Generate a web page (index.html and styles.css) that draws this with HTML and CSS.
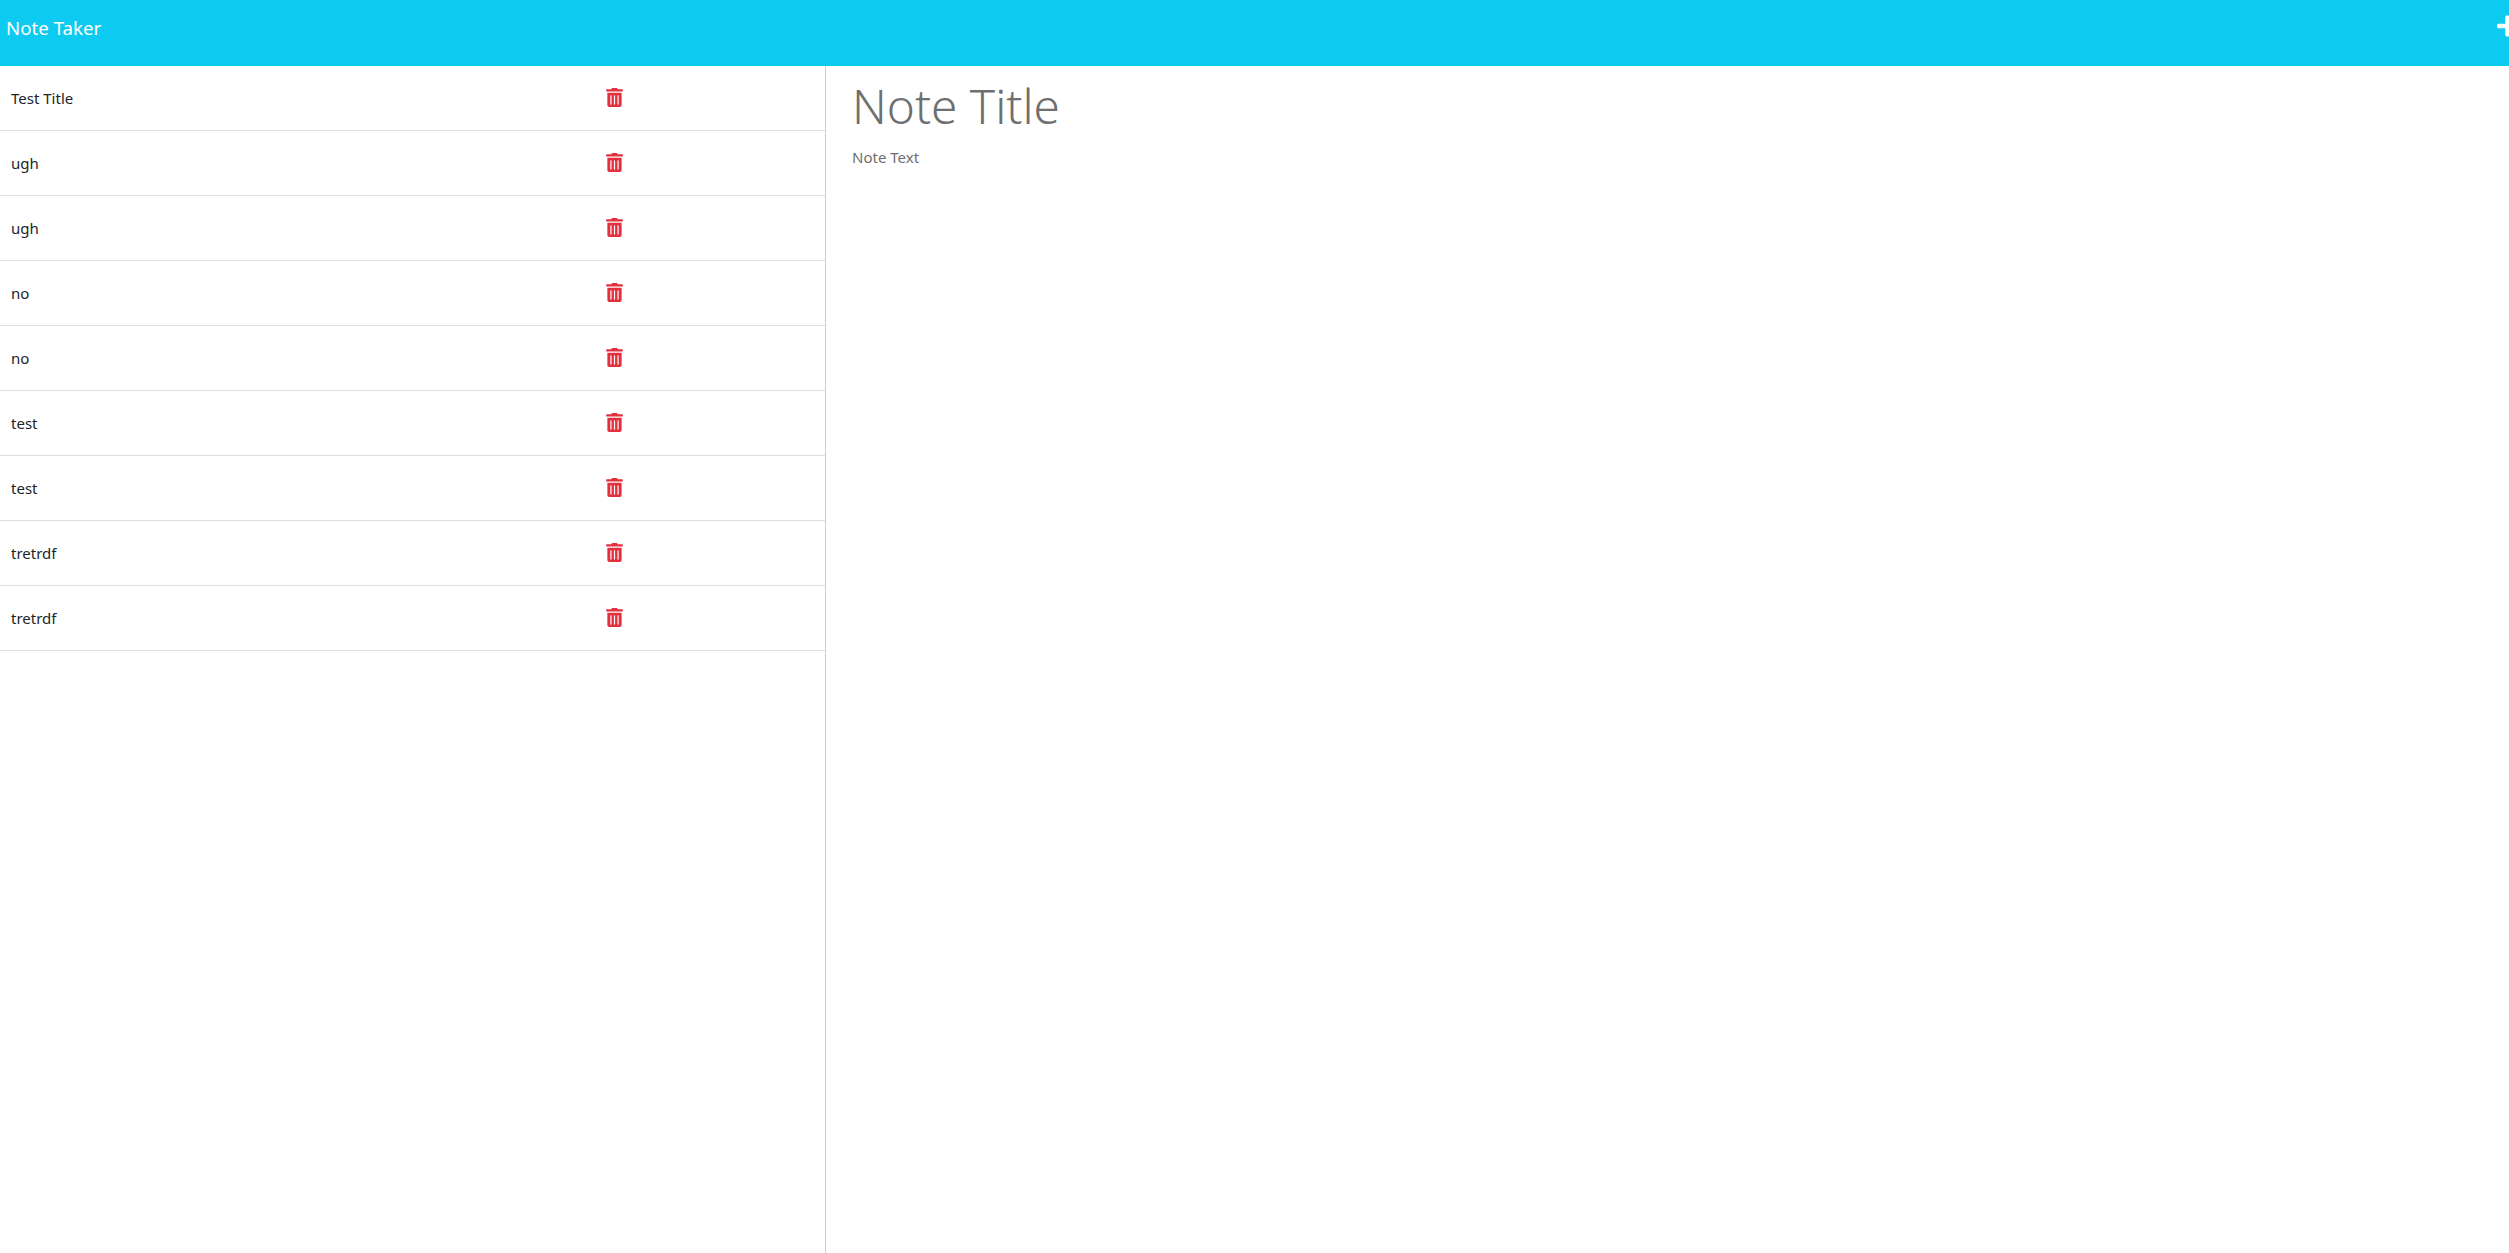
FILE: index.html
```html
<!DOCTYPE html>
<html lang="en">

<head>
  <meta charset="UTF-8" />
  <meta name="viewport" content="width=device-width, initial-scale=1.0" />
  <title>Note Taker</title>
  <link rel="stylesheet" href="styles.css">
</head>

<body>
  <!-- top bar -->
  <nav class="navbar">
    <span class="brand">Note Taker</span>
    <svg class="plus" viewBox="0 0 448 512">
      <path d="M416 208H272V64c0-17.67-14.33-32-32-32h-32c-17.67 0-32 14.33-32 32v144H32c-17.67 0-32 14.33-32 32v32c0 17.67 14.33 32 32 32h144v144c0 17.67 14.33 32 32 32h32c17.67 0 32-14.33 32-32V304h144c17.67 0 32-14.33 32-32v-32c0-17.67-14.33-32-32-32z" />
    </svg>
  </nav>

  <div class="main">
    <!-- saved notes -->
    <ul class="note-list">
      <li class="note-row"><span class="note-name">Test Title</span><svg class="trash" viewBox="0 0 448 512"><use href="#trash-path" /></svg></li>
      <li class="note-row"><span class="note-name">ugh</span><svg class="trash" viewBox="0 0 448 512"><use href="#trash-path" /></svg></li>
      <li class="note-row"><span class="note-name">ugh</span><svg class="trash" viewBox="0 0 448 512"><use href="#trash-path" /></svg></li>
      <li class="note-row"><span class="note-name">no</span><svg class="trash" viewBox="0 0 448 512"><use href="#trash-path" /></svg></li>
      <li class="note-row"><span class="note-name">no</span><svg class="trash" viewBox="0 0 448 512"><use href="#trash-path" /></svg></li>
      <li class="note-row"><span class="note-name">test</span><svg class="trash" viewBox="0 0 448 512"><use href="#trash-path" /></svg></li>
      <li class="note-row"><span class="note-name">test</span><svg class="trash" viewBox="0 0 448 512"><use href="#trash-path" /></svg></li>
      <li class="note-row"><span class="note-name">tretrdf</span><svg class="trash" viewBox="0 0 448 512"><use href="#trash-path" /></svg></li>
      <li class="note-row"><span class="note-name">tretrdf</span><svg class="trash" viewBox="0 0 448 512"><use href="#trash-path" /></svg></li>
    </ul>

    <!-- current note -->
    <div class="editor">
      <div class="note-title">Note Title</div>
      <div class="note-text">Note Text</div>
    </div>
  </div>

  <svg class="defs" width="0" height="0">
    <path id="trash-path" d="M32 464a48 48 0 0 0 48 48h288a48 48 0 0 0 48-48V128H32zm272-256a16 16 0 0 1 32 0v224a16 16 0 0 1-32 0zm-96 0a16 16 0 0 1 32 0v224a16 16 0 0 1-32 0zm-96 0a16 16 0 0 1 32 0v224a16 16 0 0 1-32 0zM432 32H312l-9.4-18.7A24 24 0 0 0 281.1 0H166.8a23.72 23.72 0 0 0-21.4 13.3L136 32H16A16 16 0 0 0 0 48v32a16 16 0 0 0 16 16h416a16 16 0 0 0 16-16V48a16 16 0 0 0-16-16z" />
  </svg>
</body>

</html>
```

FILE: styles.css
```css
* {
  box-sizing: border-box;
}

html,
body {
  height: 100%;
}

body {
  margin: 0;
  display: flex;
  flex-direction: column;
  overflow: hidden;
  background: #fff;
  font-family: "Noto Sans", "Open Sans", sans-serif;
  color: #212529;
}

/* top bar */
.navbar {
  display: flex;
  justify-content: space-between;
  flex: 0 0 66px;
  padding: 14px 0 0 6px;
  background: #0dcaf0;
  overflow: hidden;
}

.brand {
  font-size: 18.7px;
  line-height: 28px;
  color: #fff;
}

.plus {
  flex: none;
  width: 21px;
  height: 24px;
  margin-right: -9px;
  fill: #fff;
}

.main {
  display: flex;
  flex: 1;
}

/* saved notes */
.note-list {
  width: 826px;
  margin: 0;
  padding: 0;
  list-style: none;
  border-right: 1px solid #cfcfcf;
}

.note-row {
  display: flex;
  align-items: center;
  height: 65px;
  padding-left: 11px;
  border-bottom: 1px solid #dedede;
}

.note-name {
  width: 595px;
  font-size: 15px;
  font-weight: 400;
}

.trash {
  width: 17px;
  height: 19px;
  margin-top: -2px;
  fill: #e2303f;
}

/* current note */
.editor {
  flex: 1;
  padding: 1px 0 0 26px;
  color: #6f6f6f;
}

.note-title {
  font-size: 47.7px;
  font-weight: 300;
  line-height: 78px;
}

.note-text {
  margin-top: 1px;
  font-size: 15px;
  line-height: 22px;
}

.defs {
  position: absolute;
}
```
